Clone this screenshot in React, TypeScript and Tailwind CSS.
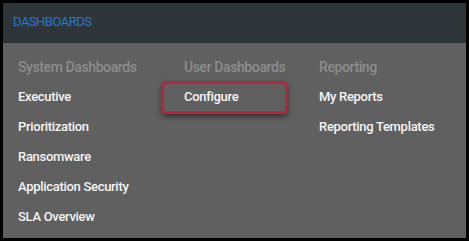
import React from 'react';

const columns = [
  {
    title: 'System Dashboards',
    width: 'w-[166px]',
    items: ['Executive', 'Prioritization', 'Ransomware', 'Application Security', 'SLA Overview'],
  },
  { title: 'User Dashboards', width: 'w-[135px]', items: ['Configure'] },
  { title: 'Reporting', width: 'flex-1', items: ['My Reports', 'Reporting Templates'] },
];

const App: React.FC = () => {
  return (
    <div className="w-[469px] h-[241px] bg-black p-[3px] font-['Roboto',sans-serif]">
      <div className="w-full h-full flex flex-col">
        <div className="h-[40px] bg-[#2e3538] flex items-center pl-[10px] pb-[2px]">
          <span className="text-[13px] text-[#1f78dc] tracking-[-0.5px]">DASHBOARDS</span>
        </div>
        <div className="flex-1 bg-[#606060] flex pl-[15px] pt-[9px]">
          {columns.map((col) => (
            <div key={col.title} className={`${col.width} flex flex-col`}>
              <div className="h-[30px] leading-[30px] text-[14px] font-medium text-[#8d8d8d] tracking-[-0.4px]">
                {col.title}
              </div>
              {col.items.map((item) => (
                <div key={item} className="relative h-[30px] leading-[30px] text-[13px] font-medium text-[#f4f4f4] tracking-[-0.3px]">
                  {item === 'Configure' && (
                    <div className="absolute left-[-23px] top-[-1px] w-[127px] h-[33px] rounded-[5px] border-[3px] border-[#b3263c] shadow-[0_3px_5px_rgba(0,0,0,0.45)]" />
                  )}
                  <span className="relative">{item}</span>
                </div>
              ))}
            </div>
          ))}
        </div>
      </div>
    </div>
  );
};

export default App;
